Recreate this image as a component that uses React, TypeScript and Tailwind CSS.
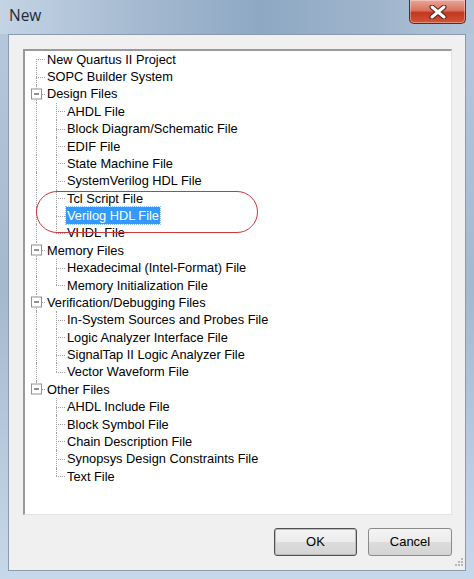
import React from 'react';

type Node = { label: string; children?: Node[]; selected?: boolean };

const tree: Node[] = [
  { label: 'New Quartus II Project' },
  { label: 'SOPC Builder System' },
  {
    label: 'Design Files',
    children: [
      { label: 'AHDL File' },
      { label: 'Block Diagram/Schematic File' },
      { label: 'EDIF File' },
      { label: 'State Machine File' },
      { label: 'SystemVerilog HDL File' },
      { label: 'Tcl Script File' },
      { label: 'Verilog HDL File', selected: true },
      { label: 'VHDL File' },
    ],
  },
  {
    label: 'Memory Files',
    children: [{ label: 'Hexadecimal (Intel-Format) File' }, { label: 'Memory Initialization File' }],
  },
  {
    label: 'Verification/Debugging Files',
    children: [
      { label: 'In-System Sources and Probes File' },
      { label: 'Logic Analyzer Interface File' },
      { label: 'SignalTap II Logic Analyzer File' },
      { label: 'Vector Waveform File' },
    ],
  },
  {
    label: 'Other Files',
    children: [
      { label: 'AHDL Include File' },
      { label: 'Block Symbol File' },
      { label: 'Chain Description File' },
      { label: 'Synopsys Design Constraints File' },
      { label: 'Text File' },
    ],
  },
];

type Row = { label: string; level: number; first: boolean; last: boolean; hasKids: boolean; parentLast: boolean; selected?: boolean };

const flatten = (): Row[] => {
  const rows: Row[] = [];
  tree.forEach((n, i) => {
    rows.push({
      label: n.label,
      level: 0,
      first: i === 0,
      last: i === tree.length - 1,
      hasKids: !!n.children,
      parentLast: false,
    });
    n.children?.forEach((c, j) => {
      rows.push({
        label: c.label,
        level: 1,
        first: false,
        last: j === n.children!.length - 1,
        hasKids: false,
        parentLast: i === tree.length - 1,
        selected: c.selected,
      });
    });
  });
  return rows;
};

const Connector: React.FC<{ first: boolean; last: boolean; box: boolean }> = ({ first, last, box }) => (
  <div className="relative w-[20px] h-full shrink-0">
    <div
      className={`absolute left-[10px] border-l border-dotted border-[#a0a0a0] ${first ? 'top-1/2' : 'top-0'} ${
        last ? 'bottom-1/2' : 'bottom-0'
      }`}
    />
    <div className="absolute left-[10px] right-[1px] top-1/2 border-t border-dotted border-[#a0a0a0]" />
    {box && (
      <div className="absolute left-[5px] top-1/2 -translate-y-1/2 w-[11px] h-[11px] border border-[#919191] bg-white flex items-center justify-center">
        <div className="w-[5px] h-px bg-[#222]" />
      </div>
    )}
  </div>
);

const Through: React.FC<{ show: boolean }> = ({ show }) => (
  <div className="relative w-[20px] h-full shrink-0">
    {show && <div className="absolute left-[10px] top-0 bottom-0 border-l border-dotted border-[#a0a0a0]" />}
  </div>
);

export default function App() {
  const rows = flatten();
  return (
    <div
      className="relative w-[474px] h-[579px] overflow-hidden bg-gradient-to-b from-[#b7c9dd] via-[#a3b9d0] to-[#c7d8ea]"
      style={{ fontFamily: '"Liberation Sans", Arial, sans-serif' }}
    >
      {/* title bar */}
      <div className="h-[34px] flex items-center pl-[9px] bg-[linear-gradient(90deg,#c4d4e5_0%,#a9bdd3_25%,#8ea8c3_55%,#9fb5cc_80%,#b3c5d9_100%)]">
        <span className="text-[15.5px] text-[#1e2a36] -mt-[2px]" style={{ fontFamily: '"Open Sans", "Noto Sans", sans-serif' }}>
          New
        </span>
      </div>
      <div className="absolute left-[409px] top-0 w-[57px] h-[24px] rounded-b-[5px] border border-t-0 border-[#5a2a24] bg-[linear-gradient(180deg,#e9a597_0%,#d8745f_45%,#c4371d_55%,#d0553a_100%)] flex items-center justify-center shadow-[inset_0_0_0_1px_rgba(255,255,255,0.35)]">
        <svg width="18" height="14" viewBox="0 0 18 14">
          <path d="M3 2 L15 12 M15 2 L3 12" stroke="#5a1c12" strokeWidth="5" strokeLinecap="round" />
          <path d="M3 2 L15 12 M15 2 L3 12" stroke="#ffffff" strokeWidth="3" strokeLinecap="round" />
        </svg>
      </div>

      {/* client area */}
      <div className="absolute left-[8px] top-[34px] w-[458px] h-[537px] bg-[#f0f0f0] border border-[#8a9bb0] flex flex-col">
        <div className="mt-[14px] ml-[14px] w-[429px] h-[466px] bg-white border-t-2 border-l-2 border-t-[#9a9a9a] border-l-[#9a9a9a] border-b border-r border-b-[#e3e3e3] border-r-[#e3e3e3]">
          <div className="-mt-[0.5px] pl-[1px] flex flex-col">
            {rows.map((r, i) => (
              <div key={i} className="h-[17.38px] flex items-center text-[12.8px] text-black">
                {r.level === 1 && <Through show={!r.parentLast} />}
                <Connector first={r.first} last={r.last} box={r.hasKids} />
                <span
                  className={`px-[1px] leading-[17px] whitespace-nowrap ${
                    r.selected ? 'bg-[#3399ff] text-white outline outline-1 outline-dotted outline-[#8ec3ff]' : ''
                  }`}
                >
                  {r.label}
                </span>
              </div>
            ))}
          </div>
        </div>

        <div className="flex justify-end gap-[11px] mt-[13px] mr-[13px]">
          <button className="w-[83px] h-[28px] rounded-[3px] border border-[#505050] shadow-[inset_0_0_0_1px_#bcbcbc] bg-[linear-gradient(180deg,#f4f4f4_0%,#ececec_48%,#dcdcdc_52%,#d4d4d4_100%)] text-[13px] text-black">
            OK
          </button>
          <button className="w-[84px] h-[28px] rounded-[3px] border border-[#8a8a8a] bg-[linear-gradient(180deg,#f4f4f4_0%,#ececec_48%,#dcdcdc_52%,#d4d4d4_100%)] text-[13px] text-black">
            Cancel
          </button>
        </div>
        <svg className="absolute right-[1px] bottom-[1px]" width="12" height="12" viewBox="0 0 12 12">
          <g fill="#b8b8b8">
            <rect x="9" y="1" width="2" height="2" />
            <rect x="6" y="4" width="2" height="2" />
            <rect x="9" y="4" width="2" height="2" />
            <rect x="3" y="7" width="2" height="2" />
            <rect x="6" y="7" width="2" height="2" />
            <rect x="9" y="7" width="2" height="2" />
          </g>
        </svg>
      </div>

      {/* red annotation ellipse */}
      <div className="absolute left-[36px] top-[191px] w-[222px] h-[42px] rounded-[21px] border-[1.5px] border-[#d3353b]" />
    </div>
  );
}
